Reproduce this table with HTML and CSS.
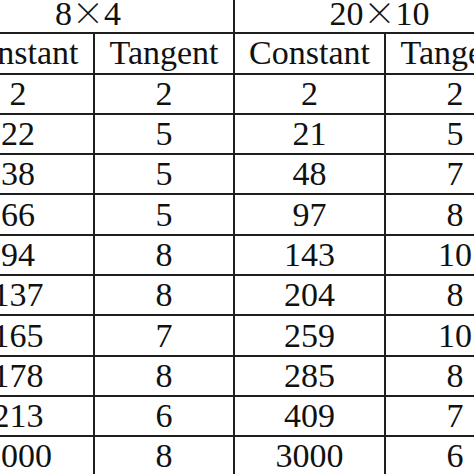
FILE: index.html
```html
<!DOCTYPE html>
<html>
<head>
<meta charset="utf-8">
<link rel="stylesheet" href="styles.css">
</head>
<body>
<table class="grid">
  <colgroup>
    <col class="c-wide-a">
    <col class="c-narrow">
    <col class="c-wide-b">
    <col class="c-narrow">
  </colgroup>
  <tr class="group-row">
    <td colspan="2">8<span class="times">×</span>4</td>
    <td colspan="2">20<span class="times">×</span>10</td>
  </tr>
  <tr><td>Constant</td><td>Tangent</td><td>Constant</td><td>Tangent</td></tr>
  <tr><td>2</td><td>2</td><td>2</td><td>2</td></tr>
  <tr><td>22</td><td>5</td><td>21</td><td>5</td></tr>
  <tr><td>38</td><td>5</td><td>48</td><td>7</td></tr>
  <tr><td>66</td><td>5</td><td>97</td><td>8</td></tr>
  <tr><td>94</td><td>8</td><td>143</td><td>10</td></tr>
  <tr><td>137</td><td>8</td><td>204</td><td>8</td></tr>
  <tr><td>165</td><td>7</td><td>259</td><td>10</td></tr>
  <tr><td>178</td><td>8</td><td>285</td><td>8</td></tr>
  <tr><td>213</td><td>6</td><td>409</td><td>7</td></tr>
  <tr><td>3000</td><td>8</td><td>3000</td><td>6</td></tr>
</table>
</body>
</html>
```
FILE: styles.css
```css
html, body {
  margin: 0;
  padding: 0;
  background: #fff;
  overflow: hidden;
  width: 474px;
  height: 474px;
}
.grid {
  border-collapse: collapse;
  table-layout: fixed;
  width: 583px;
  margin-left: -59px;
  margin-top: -7px;
  font-family: "Liberation Serif", "Times New Roman", serif;
  font-size: 34px;
  color: #111;
}
.c-wide-a { width: 152px; }
.c-narrow { width: 140px; }
.c-wide-b { width: 151px; }
.grid td {
  border: 2px solid #1e1e1e;
  height: 40.3px;
  padding: 0;
  text-align: center;
  vertical-align: middle;
  line-height: 1;
  box-sizing: border-box;
}
.group-row td {
  border-top: none;
}
.times {
  font-family: "Noto Sans CJK SC", sans-serif;
  font-weight: 300;
  display: inline-block;
  width: 1em;
  font-size: 32px;
}
```
